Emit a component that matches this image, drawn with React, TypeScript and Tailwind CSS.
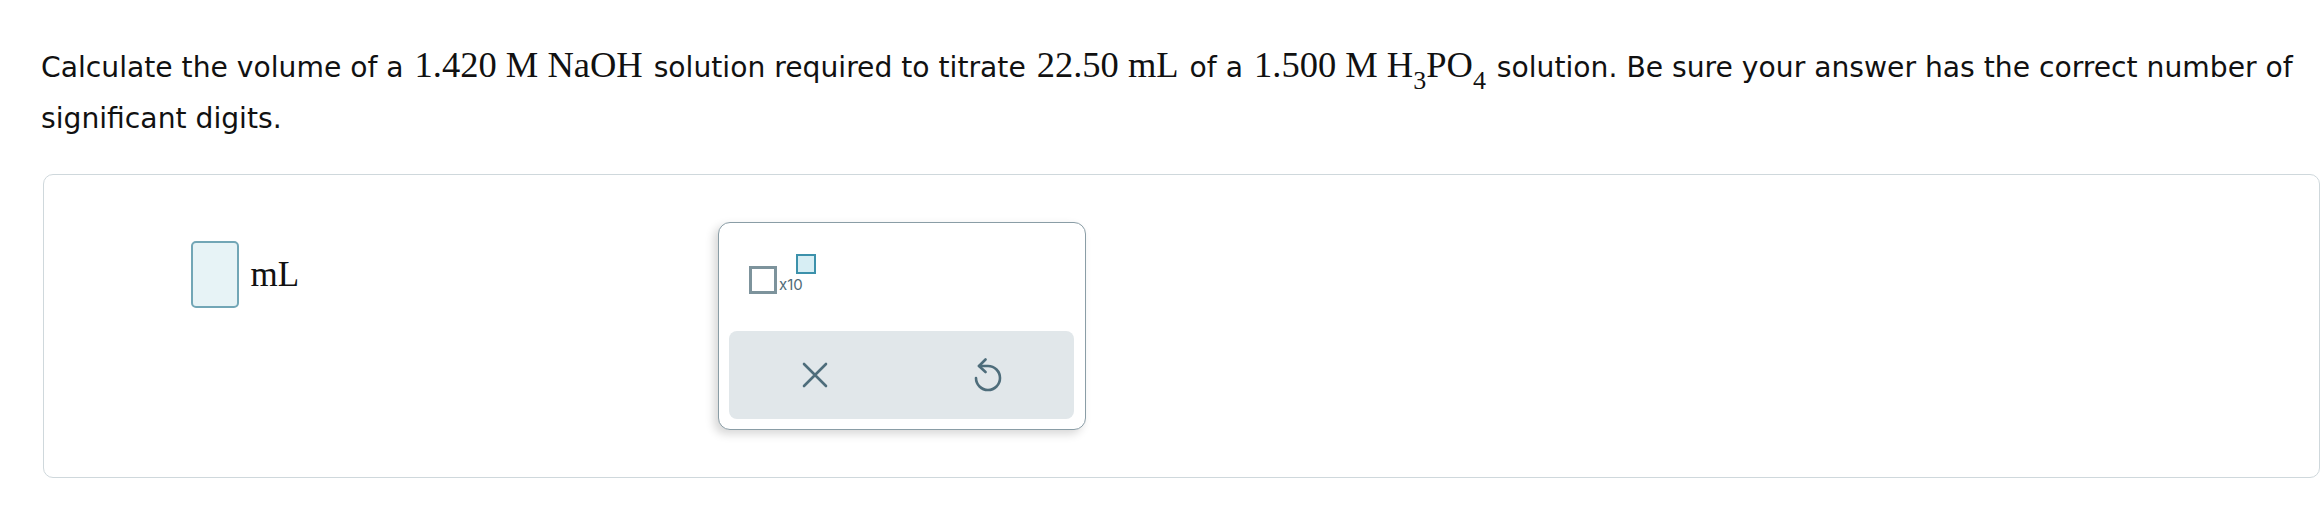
import React from 'react'

function Math({ children }: { children: React.ReactNode }) {
  return <span className="mx-[2px] font-['Liberation_Serif',serif] text-[36.5px]">{children}</span>
}

function Sub({ children }: { children: React.ReactNode }) {
  return <sub className="text-[26px] bottom-[-12px]">{children}</sub>
}

function ClearIcon() {
  return (
    <svg width="26" height="26" viewBox="0 0 26 26" fill="none" stroke="#4e6d7b" strokeWidth="2.6" strokeLinecap="round">
      <path d="M2 2 L24 24 M24 2 L2 24" />
    </svg>
  )
}

function UndoIcon() {
  return (
    <svg width="30" height="34" viewBox="0 0 30 34" fill="none" stroke="#4e6d7b" strokeWidth="2.6" strokeLinecap="round" strokeLinejoin="round">
      <path d="M6 8 H15 A12 12 0 1 1 3 20" />
      <path d="M12.5 1.5 L6 8 L12.5 14" />
    </svg>
  )
}

export default function App() {
  return (
    <div className="w-[2320px] h-[528px] bg-white pl-[41px] pt-[39px] overflow-hidden">
      {/* Question text */}
      <p className="font-['DejaVu_Sans',sans-serif] text-[28.2px] leading-[51px] text-[#111]">
        Calculate the volume of a <Math>1.420 M NaOH</Math> solution required to titrate{' '}
        <Math>22.50 mL</Math> of a{' '}
        <Math>
          1.500 M H<Sub>3</Sub>PO<Sub>4</Sub>
        </Math>{' '}
        solution. Be sure your answer has the correct number of significant digits.
      </p>

      {/* Answer card */}
      <div className="mt-[30px] ml-[2px] h-[304px] border-[1.5px] border-[#cfd8dc] rounded-[10px] flex items-start pl-[146.5px]">
        <div className="w-[527px] mt-[65.5px] flex items-center">
          <div className="w-[48px] h-[67px] border-[2.5px] border-[#72a6b6] bg-[#e7f3f6] rounded-[5px]" />
          <span className="ml-[12px] font-['Liberation_Serif',serif] text-[35px] leading-none text-[#111]">mL</span>
        </div>

        {/* Palette */}
        <div className="mt-[46.5px] w-[368px] h-[208px] border-[1.5px] border-[#8a9da6] rounded-[12px] bg-white shadow-[-4px_4px_10px_rgba(0,0,0,0.16)] flex flex-col px-[10.5px] pb-[10px]">
          <div className="flex-1 flex items-start pl-[20px] pt-[31.5px]">
            <div className="mt-[12px] w-[28px] h-[28px] border-[3px] border-[#7d939c]" />
            <span className="mt-[23px] ml-[2px] font-['Inter',sans-serif] text-[15px] leading-[15px] text-[#4f6b78]">x10</span>
            <div className="ml-[-7px] w-[20px] h-[20px] border-[2.5px] border-[#3c91ab] bg-[#d7eef4]" />
          </div>
          <div className="h-[88px] bg-[#e1e7ea] rounded-[8px] grid grid-cols-2">
            <div className="flex items-center justify-center">
              <ClearIcon />
            </div>
            <div className="flex items-center justify-center">
              <UndoIcon />
            </div>
          </div>
        </div>
      </div>
    </div>
  )
}
